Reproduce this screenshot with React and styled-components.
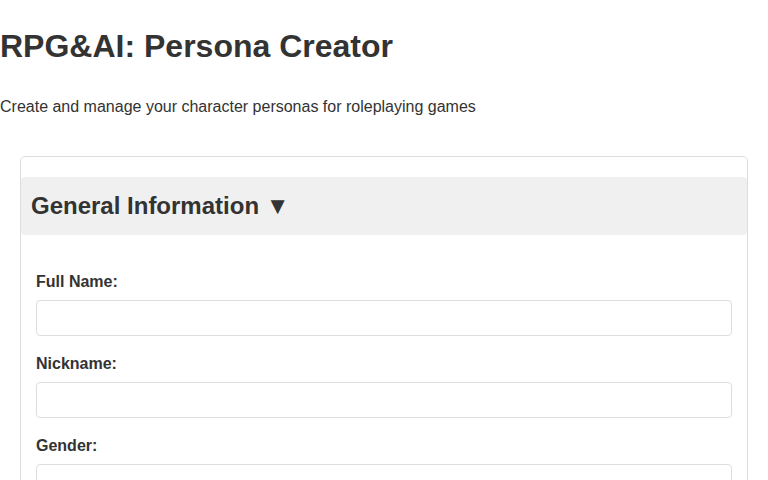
import styled, { createGlobalStyle } from 'styled-components';

const GlobalStyle = createGlobalStyle`
    body {
        margin: 0;
        font-family: "Liberation Sans", Arial, sans-serif;
        color: #333;
        background: #fff;
    }
`;

const Title = styled.h1`
    font-size: 32px;
    margin: 27px 0 0;
    line-height: 1.2;
`;

const Subtitle = styled.p`
    font-size: 16px;
    margin: 33px 0 0;
`;

const Card = styled.section`
    margin: 40px 20px 0;
    padding-top: 20px;
    border: 1px solid #ddd;
    border-radius: 5px;
`;

const SectionHeader = styled.h2`
    margin: 0;
    padding: 0 10px;
    height: 58px;
    display: flex;
    align-items: center;
    font-size: 24px;
    background: #f0f0f0;
    border-radius: 4px;
    cursor: pointer;
`;

const Fields = styled.div`
    padding: 38px 15px 0;
    display: flex;
    flex-direction: column;
`;

const Field = styled.div`
    display: flex;
    flex-direction: column;
    margin-bottom: 19px;
`;

const Label = styled.label`
    font-weight: bold;
    font-size: 16px;
    margin-bottom: 9px;
`;

const Input = styled.input`
    height: 36px;
    box-sizing: border-box;
    border: 1px solid #ddd;
    border-radius: 4px;
    padding: 8px;
    font-size: 16px;
    font-family: inherit;
`;

const fields = ['Full Name', 'Nickname', 'Gender', 'Age'];

const App = () => {
  return (
    <>
        <GlobalStyle />
        <Title>RPG&amp;AI: Persona Creator</Title>
        <Subtitle>Create and manage your character personas for roleplaying games</Subtitle>
        <Card>
            <SectionHeader>General Information ▼</SectionHeader>
            <Fields>
                {fields.map((f) => (
                    <Field key={f}>
                        <Label>{f}:</Label>
                        <Input type="text" />
                    </Field>
                ))}
            </Fields>
        </Card>
    </>
  );
}

export default App;
